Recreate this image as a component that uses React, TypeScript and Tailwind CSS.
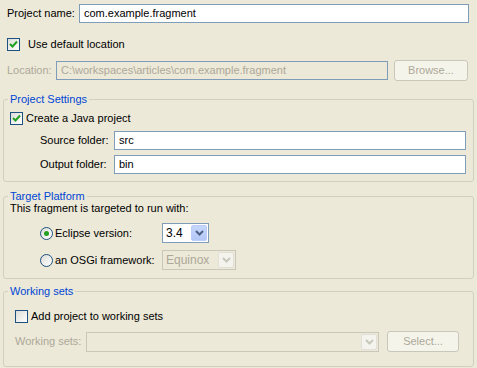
import React from 'react';

const font = { fontFamily: '"Liberation Sans", Arial, sans-serif' };

function Check({ checked }: { checked?: boolean }) {
  return (
    <span className="w-[13px] h-[13px] border border-[#1c5180] bg-gradient-to-br from-[#dcdcd7] to-white flex items-center justify-center shrink-0">
      {checked && (
        <svg width="9" height="9" viewBox="0 0 9 9">
          <path d="M1 4 L3.5 6.5 L8 1.5" fill="none" stroke="#21a121" strokeWidth="2" />
        </svg>
      )}
    </span>
  );
}

function Radio({ checked }: { checked?: boolean }) {
  return (
    <span className="w-[13px] h-[13px] rounded-full border border-[#1c5180] bg-gradient-to-br from-[#dcdcd7] to-white flex items-center justify-center shrink-0">
      {checked && <span className="w-[5px] h-[5px] rounded-full bg-[#21a121]" />}
    </span>
  );
}

function Chevron({ color }: { color: string }) {
  return (
    <svg width="9" height="6" viewBox="0 0 9 6">
      <path d="M1 1 L4.5 4.5 L8 1" fill="none" stroke={color} strokeWidth="2" />
    </svg>
  );
}

function Combo({ value, width, disabled }: { value: string; width: string; disabled?: boolean }) {
  return (
    <div
      className={`${width} h-[20px] border flex items-center ${
        disabled ? 'border-[#c9c7ba] bg-[#ece9d8] text-[#aca899]' : 'border-[#7f9db9] bg-white text-black'
      }`}
    >
      <span className="flex-1 pl-[3px] leading-[13px] text-[12px]">{value}</span>
      <span
        className={`w-[16px] h-[16px] mr-[1px] rounded-[2px] flex items-center justify-center ${
          disabled ? 'bg-[#f4f3ee] border border-[#e2e0d6]' : 'bg-gradient-to-b from-[#c6d6fc] to-[#b4c8f6] border border-[#b9cefa]'
        }`}
      >
        <Chevron color={disabled ? '#c9c7ba' : '#4d6185'} />
      </span>
    </div>
  );
}

function TextBox({ value, className, disabled }: { value: string; className: string; disabled?: boolean }) {
  return (
    <div
      className={`${className} h-[19px] border border-[#7f9db9] flex items-center pl-[4px] leading-[13px] ${
        disabled ? 'bg-[#ece9d8] text-[#aca899]' : 'bg-white text-black'
      }`}
    >
      {value}
    </div>
  );
}

function Button({ label, className }: { label: string; className: string }) {
  return (
    <div
      className={`${className} h-[21px] rounded-[3px] border border-[#c9c7ba] bg-[#f5f4ea] text-[#aca899] flex items-center justify-center`}
    >
      {label}
    </div>
  );
}

function Group({ title, className, children }: { title: string; className: string; children: React.ReactNode }) {
  return (
    <fieldset className={`mx-[3px] border border-[#d0d0bf] rounded-[3px] ${className}`}>
      <legend className="ml-[4px] px-[2px] text-[#0046d5] leading-[14px]">{title}</legend>
      {children}
    </fieldset>
  );
}

export default function App() {
  return (
    <div className="w-[477px] h-[368px] bg-[#ece9d8] text-[11px] leading-[13px] text-black overflow-hidden" style={font}>
      {/* Project name */}
      <div className="flex items-center pt-[4px] pl-[7px] pr-[8px]">
        <span className="w-[72px]">Project name:</span>
        <TextBox value="com.example.fragment" className="flex-1" />
      </div>

      <div className="flex items-center gap-[8px] mt-[15px] ml-[7px]">
        <Check checked />
        <span>Use default location</span>
      </div>

      <div className="flex items-center mt-[9px] pl-[7px] pr-[9px]">
        <span className="w-[49px] text-[#aca899]">Location:</span>
        <TextBox value="C:\workspaces\articles\com.example.fragment" className="w-[332px]" disabled />
        <Button label="Browse..." className="ml-[6px] flex-1" />
      </div>

      {/* Project Settings */}
      <Group title="Project Settings" className="mt-[11px] pb-[7px]">
        <div className="flex items-center gap-[3px] mt-[6px] ml-[6px]">
          <Check checked />
          <span>Create a Java project</span>
        </div>
        <div className="flex items-center mt-[6px] pl-[36px] pr-[7px]">
          <span className="w-[74px]">Source folder:</span>
          <TextBox value="src" className="flex-1" />
        </div>
        <div className="flex items-center mt-[5px] pl-[36px] pr-[7px]">
          <span className="w-[74px]">Output folder:</span>
          <TextBox value="bin" className="flex-1" />
        </div>
      </Group>

      {/* Target Platform */}
      <Group title="Target Platform" className="mt-[7px] pb-[8px]">
        <div className="pl-[6px] mt-[-1px]">This fragment is targeted to run with:</div>
        <div className="flex items-center mt-[8px] pl-[36px]">
          <Radio checked />
          <span className="ml-[2px] w-[107px]">Eclipse version:</span>
          <Combo value="3.4" width="w-[47px]" />
        </div>
        <div className="flex items-center mt-[7px] pl-[36px]">
          <Radio />
          <span className="ml-[2px] w-[107px]">an OSGi framework:</span>
          <Combo value="Equinox" width="w-[74px]" disabled />
        </div>
      </Group>

      {/* Working sets */}
      <Group title="Working sets" className="mt-[5px] pb-[14px]">
        <div className="flex items-center gap-[3px] mt-[12px] ml-[11px]">
          <Check />
          <span>Add project to working sets</span>
        </div>
        <div className="flex items-center mt-[8px] pl-[11px] pr-[14px]">
          <span className="w-[71px] text-[#aca899]">Working sets:</span>
          <Combo value="" width="w-[293px]" disabled />
          <Button label="Select..." className="ml-[8px] flex-1" />
        </div>
      </Group>
    </div>
  );
}
